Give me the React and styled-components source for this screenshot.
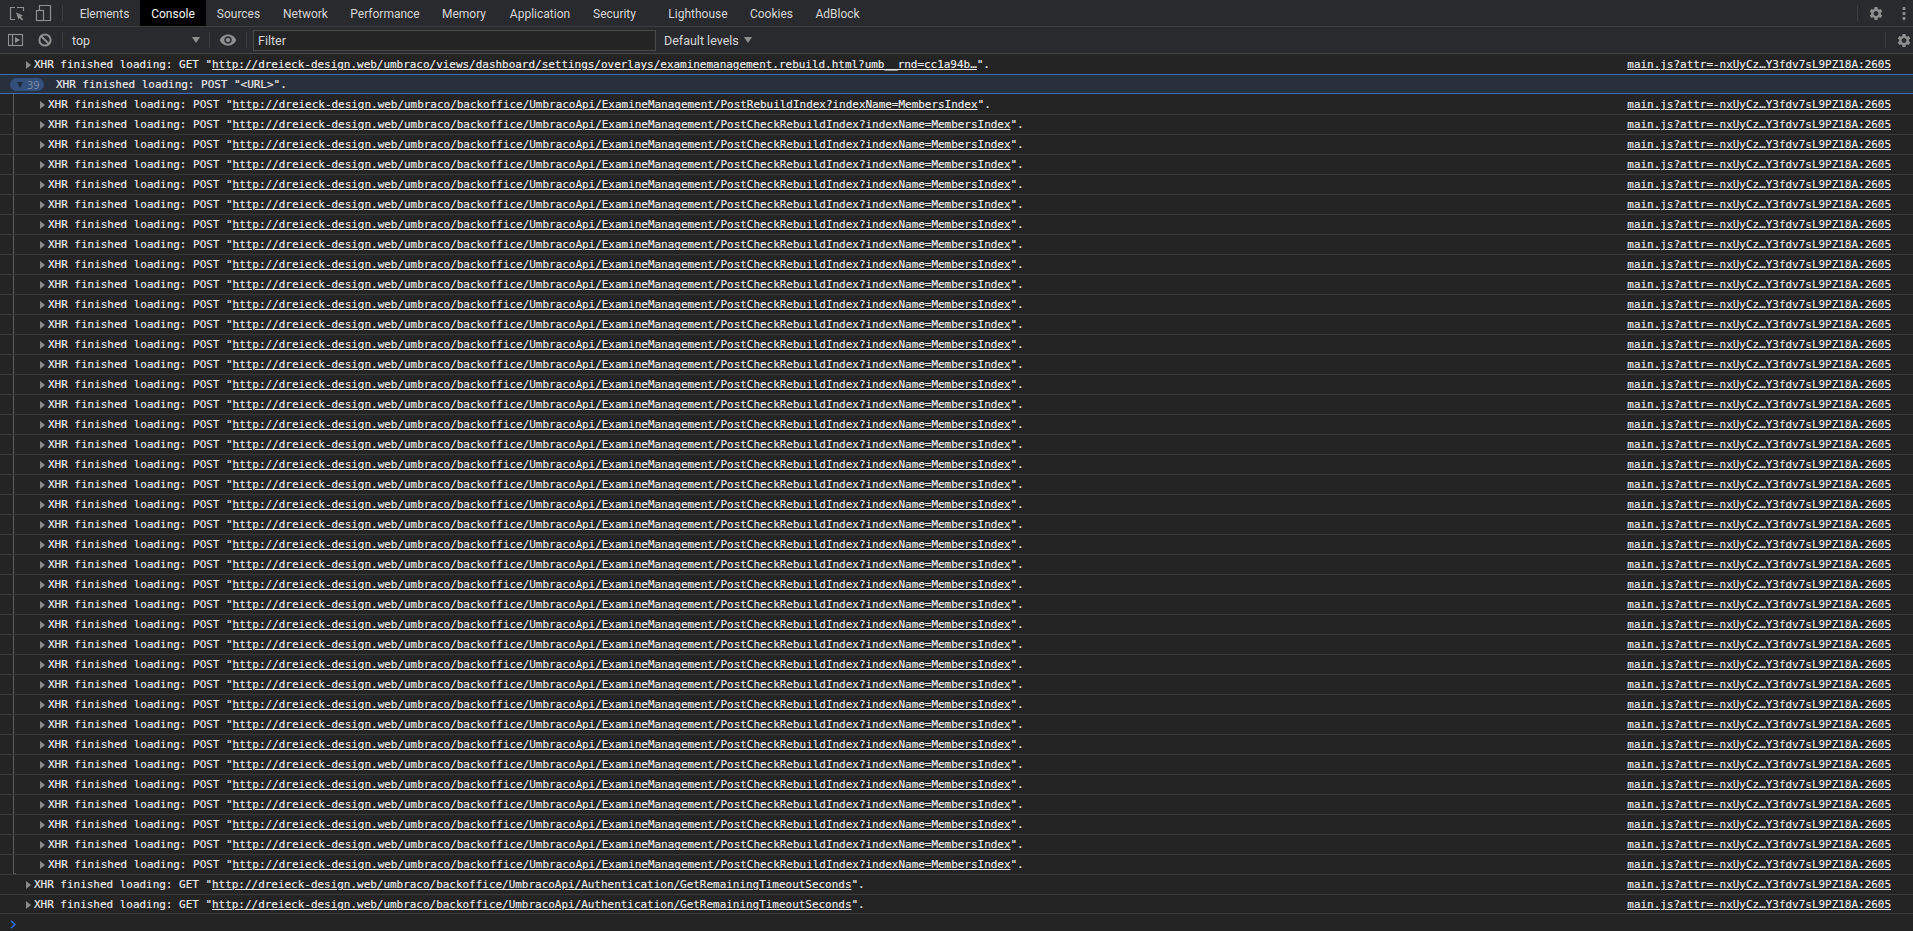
import React from 'react';
import styled, { createGlobalStyle } from 'styled-components';
import { MdSettings, MdVisibility } from 'react-icons/md';

const Global = createGlobalStyle`
  html, body { margin: 0; padding: 0; background: #242424; height: 100%; overflow: hidden; }
  #root { height: 100%; }
`;
const Page = styled.div`
  height: 931px; display: flex; flex-direction: column; background: #242424; color: #e8e8e8;
  font-family: Roboto, "Open Sans", sans-serif; font-size: 12px;
`;
const TabBar = styled.div`
  height: 26px; flex: none; display: flex; align-items: stretch; background: #292a2d; border-bottom: 1px solid #3d3d3d;
`;
const IconSlot = styled.div`
  width: ${p => p.$w}px; flex: none; display: flex; align-items: center; justify-content: center; color: #8f8f8f; margin: ${p => p.$m || '0'};
`;
const Divider = styled.div`
  width: 1px; height: 16px; align-self: center; flex: none; background: #3d3d3d; margin: ${p => p.$m || '0'};
`;
const Tab = styled.div`
  width: ${p => p.$w}px; flex: none; box-sizing: border-box; padding-top: 2px; display: flex; align-items: center; justify-content: center; margin-left: ${p => p.$gap || 0}px;
  font-size: 12px; white-space: nowrap; color: ${p => (p.$active ? '#f5f5f5' : '#d6d6d6')}; background: ${p => (p.$active ? '#000' : 'transparent')};
`;
const Spacer = styled.div` flex: 1; `;
const FilterBar = styled.div`
  height: 26px; flex: none; display: flex; align-items: center; background: #292a2d; border-bottom: 1px solid #474747;
`;
const ContextSelect = styled.div`
  width: 146px; flex: none; padding: 0 9px; box-sizing: border-box; display: flex; align-items: center; justify-content: space-between; color: #d6d6d6; font-size: 12.5px;
`;
const Caret = styled.span`
  width: 0; height: 0; flex: none; border-left: 4px solid transparent; border-right: 4px solid transparent; border-top: 6px solid #8f8f8f; margin-left: ${p => p.$m || 0}px;
`;
const FilterInput = styled.div`
  width: 403px; height: 21px; box-sizing: border-box; flex: none; border: 1px solid #4a4a4a; background: #242424; padding-left: 4px; display: flex; align-items: center; color: #d6d6d6; margin-left: 6px; font-size: 12.5px;
`;
const Levels = styled.div` margin-left: 8px; display: flex; align-items: center; color: #d6d6d6; font-size: 12.5px; `;
const Log = styled.div`
  flex: 1; display: flex; flex-direction: column; font-family: "DejaVu Sans Mono", monospace; font-size: 11px; line-height: 14px; letter-spacing: -0.03px; color: #ececec; overflow: hidden;
  -webkit-text-stroke: 0.15px #ececec;
`;
const Row = styled.div`
  height: ${p => p.$h || 20}px; box-sizing: border-box; flex: none; display: flex; align-items: flex-start; justify-content: space-between;
  padding: ${p => p.$pt ?? 3}px 22px 0 ${p => (p.$nested ? 40 : 26)}px;
  border-bottom: ${p => (p.$plain ? 'none' : '1px solid #3a3a3a')}; position: relative;
`;
const GroupLine = styled.span`
  position: absolute; left: 13px; top: 0; bottom: 0; width: 3px; box-sizing: border-box; border-left: 1px solid #5a5a5a;
  border-bottom: ${p => (p.$last ? '1px solid #5a5a5a' : 'none')};
`;
const GroupHead = styled.div`
  height: 20px; box-sizing: border-box; flex: none; display: flex; align-items: flex-start; padding: 3px 0 0 10px; background: #29303d; border-top: 1px solid #3c6fb8; border-bottom: 1px solid #3c6fb8;
`;
const Badge = styled.div`
  width: 34px; height: 13px; border-radius: 7px; background: #33507d; display: flex; align-items: center; color: #7f8ea8; font: 11px/13px "Open Sans", sans-serif; -webkit-text-stroke: 0; letter-spacing: 0; flex: none; padding-left: 7px; box-sizing: border-box; gap: 4px; margin: 0 12px 0 0;
`;
const DownArrow = styled.span`
  width: 0; height: 0; flex: none; border-left: 3.5px solid transparent; border-right: 3.5px solid transparent; border-top: 6px solid #1f2b3d;
`;
const Message = styled.div` display: flex; align-items: center; white-space: pre; `;
const Arrow = styled.span`
  width: 0; height: 0; flex: none; border-top: 4px solid transparent; border-bottom: 4px solid transparent; border-left: 5px solid #8a8a8a; margin-right: 3px;
`;
const Link = styled.span` text-decoration: underline; `;
const Prompt = styled.div`
  flex: none; display: flex; padding: 6px 0 0 10px;
`;

const S = '#8f8f8f';
const Inspect = () => (
  <svg width="18" height="18" viewBox="0 0 18 18" fill="none">
    <path d="M7 3.5H2.5V15.5H7" stroke={S} strokeWidth="1.2" />
    <path d="M9 3.5H15.5V7" stroke={S} strokeWidth="1.2" />
    <path d="M8 8.5 L15 11.5 L12.8 12.8 L15.2 15.2 L14 16.4 L11.6 14 L10.6 15.8Z" fill={S} />
  </svg>
);
const Device = () => (
  <svg width="20" height="20" viewBox="0 0 20 20" fill="none" stroke={S} strokeWidth="1.2">
    <path d="M5.5 7V2.5H16.5V17.5H10" />
    <rect x="2.5" y="7.5" width="7" height="10" />
  </svg>
);
const Sidebar = () => (
  <svg width="16" height="16" viewBox="0 0 16 16" fill="none">
    <rect x="0.5" y="2.5" width="14" height="11" stroke={S} strokeWidth="1.2" />
    <path d="M4.5 3v10" stroke={S} strokeWidth="1.2" />
    <path d="M7 5 L12 8 L7 11Z" fill={S} />
  </svg>
);
const Block = () => (
  <svg width="16" height="16" viewBox="0 0 16 16" fill="none" stroke={S} strokeWidth="2">
    <circle cx="8" cy="8" r="5.6" />
    <path d="M4 4l8 8" />
  </svg>
);
const Dots = () => (
  <svg width="4" height="14" viewBox="0 0 4 14" fill={S}>
    <rect x="0.5" y="1" width="3" height="3" rx="1" />
    <rect x="0.5" y="6" width="3" height="3" rx="1" />
    <rect x="0.5" y="11" width="3" height="3" rx="1" />
  </svg>
);

const tabs = [
  { t: 'Elements', w: 71 }, { t: 'Console', w: 66, active: true }, { t: 'Sources', w: 65 }, { t: 'Network', w: 69 },
  { t: 'Performance', w: 90 }, { t: 'Memory', w: 68 }, { t: 'Application', w: 84 }, { t: 'Security', w: 65 },
  { t: 'Lighthouse', w: 82, gap: 10 }, { t: 'Cookies', w: 65 }, { t: 'AdBlock', w: 67 },
];
const SRC = 'main.js?attr=-nxUyCz…Y3fdv7sL9PZ18A:2605';
const B = 'http://dreieck-design.web/umbraco/backoffice/UmbracoApi/';

const LogRow = ({ method, url, nested, last, ...rest }) => (
  <Row $nested={nested} {...rest}>
    {nested && <GroupLine $last={last} />}
    <Message>
      <Arrow />
      {`XHR finished loading: ${method} "`}<Link>{url}</Link>{'".'}
    </Message>
    <Link>{SRC}</Link>
  </Row>
);

export default function App() {
  return (
    <Page>
      <Global />
      <TabBar>
        <IconSlot $w={34}><Inspect /></IconSlot>
        <IconSlot $w={20}><Device /></IconSlot>
        <Divider $m="0 6px 0 8px" />
        {tabs.map(x => <Tab key={x.t} $w={x.w} $active={x.active} $gap={x.gap}>{x.t}</Tab>)}
        <Spacer />
        <Divider />
        <IconSlot $w={16} $m="0 0 0 10px"><MdSettings size={19} /></IconSlot>
        <IconSlot $w={4} $m="0 7px 0 18px"><Dots /></IconSlot>
      </TabBar>
      <FilterBar>
        <IconSlot $w={32}><Sidebar /></IconSlot>
        <IconSlot $w={25}><Block /></IconSlot>
        <Divider $m="0 0 0 5px" />
        <ContextSelect>top<Caret /></ContextSelect>
        <Divider />
        <IconSlot $w={36}><MdVisibility size={18} /></IconSlot>
        <Divider />
        <FilterInput>Filter</FilterInput>
        <Levels>Default levels<Caret $m={5} /></Levels>
        <Spacer />
        <Divider />
        <IconSlot $w={16} $m="0 1px 0 10px"><MdSettings size={19} /></IconSlot>
      </FilterBar>
      <Log>
        <LogRow $plain $pt={4} method="GET" url="http://dreieck-design.web/umbraco/views/dashboard/settings/overlays/examinemanagement.rebuild.html?umb__rnd=cc1a94b…" />
        <GroupHead><Badge><DownArrow />39</Badge><Message>{'XHR finished loading: POST "<URL>".'}</Message></GroupHead>
        <LogRow nested $h={21} $pt={4} method="POST" url={`${B}ExamineManagement/PostRebuildIndex?indexName=MembersIndex`} />
        {Array.from({ length: 38 }, (_, i) => (
          <LogRow key={i} nested last={i === 37} method="POST" url={`${B}ExamineManagement/PostCheckRebuildIndex?indexName=MembersIndex`} />
        ))}
        <LogRow method="GET" url={`${B}Authentication/GetRemainingTimeoutSeconds`} />
        <LogRow $h={19} method="GET" url={`${B}Authentication/GetRemainingTimeoutSeconds`} />
        <Prompt>
          <svg width="6" height="9" viewBox="0 0 6 9" fill="none" stroke="#2f6fe0" strokeWidth="1.6"><path d="M1 .7L4.8 4.5 1 8.3" /></svg>
        </Prompt>
      </Log>
    </Page>
  );
}
